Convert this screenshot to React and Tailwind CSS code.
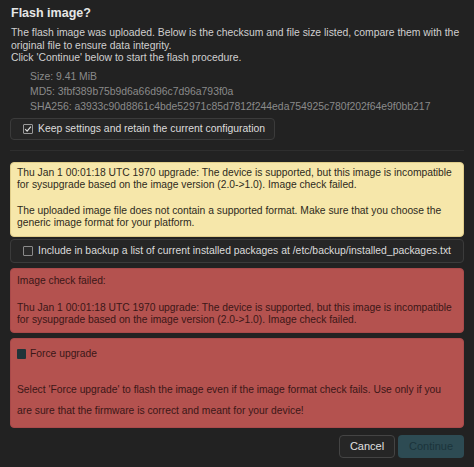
export default function App() {
  return (
    <div
      className="w-[474px] h-[467px] bg-[#222222] text-[#d4d4d4] overflow-hidden px-[10px]"
      style={{ fontFamily: '"Liberation Sans", Arial, sans-serif' }}
    >
      <h3 className="pt-[5px] pl-[1px] text-[12.5px] leading-[16px] font-bold text-[#e6e6e6]">Flash image?</h3>
      <div className="mt-[6px] pl-[1px] text-[10.4px] leading-[12.5px] text-[#d0d0d0]">
        <p>
          The flash image was uploaded. Below is the checksum and file size listed, compare them with the
          original file to ensure data integrity.
          <br />
          Click 'Continue' below to start the flash procedure.
        </p>
      </div>
      <ul className="mt-[4px] pl-[20px] text-[10.4px] leading-[15px] text-[#8a8a8a]">
        <li>Size: 9.41 MiB</li>
        <li>MD5: 3fbf389b75b9d6a66d96c7d96a793f0a</li>
        <li>SHA256: a3933c90d8861c4bde52971c85d7812f244eda754925c780f202f64e9f0bb217</li>
      </ul>
      <div className="mt-[4px] w-[265px] h-[22px] flex items-center gap-[5px] pl-[12px] rounded-[4px] border border-[#3b3b3b] bg-[#262626] text-[10.4px] text-[#dcdcdc]">
        <span className="w-[10px] h-[10px] border border-[#9a9a9a] rounded-[1px] flex items-center justify-center bg-[#2a2a2a]">
          <svg width="8" height="8" viewBox="0 0 8 8">
            <path d="M1.2 4.2 L3.1 6.1 L6.9 1.6" stroke="#e0e0e0" strokeWidth="1.2" fill="none" />
          </svg>
        </span>
        <span>Keep settings and retain the current configuration</span>
      </div>
      <div className="mt-[10px] border-t border-[#2e2e2e]" />
      <div className="mt-[11px] rounded-[4px] border border-[#e0cd8a] bg-[#f6e7aa] text-[#2e2a20] text-[10.3px] leading-[12.5px] pl-[6px] pr-[3px] pt-[4px] pb-[6px]">
        <p>
          Thu Jan 1 00:01:18 UTC 1970 upgrade: The device is supported, but this image is incompatible for
          sysupgrade based on the image version (2.0-&gt;1.0). Image check failed.
        </p>
        <p className="mt-[13px]">
          The uploaded image file does not contain a supported format. Make sure that you choose the generic
          image format for your platform.
        </p>
      </div>
      <div className="mt-[2px] h-[24px] flex items-center gap-[5px] pl-[12px] rounded-[4px] border border-[#3b3b3b] bg-[#262626] text-[10.4px] text-[#dcdcdc]">
        <span className="w-[10px] h-[10px] border border-[#8a8a8a] rounded-[1px] bg-[#2a2a2a]" />
        <span>Include in backup a list of current installed packages at /etc/backup/installed_packages.txt</span>
      </div>
      <div className="mt-[5px] rounded-[4px] border border-[#a9494a] bg-[#b4524f] text-[#3b1717] text-[10.3px] leading-[12px] pl-[6px] pr-[3px] pt-[6px] pb-[6px]">
        <p>Image check failed:</p>
        <p className="mt-[15px]">
          Thu Jan 1 00:01:18 UTC 1970 upgrade: The device is supported, but this image is incompatible for
          sysupgrade based on the image version (2.0-&gt;1.0). Image check failed.
        </p>
      </div>
      <div className="mt-[5px] h-[90px] rounded-[4px] border border-[#a9494a] bg-[#b4524f] text-[#3b1717] text-[10.3px] pl-[6px] pr-[12px] pt-[9px]">
        <div className="flex items-center gap-[4px] h-[12px]">
          <span className="w-[9px] h-[10px] bg-[#1f3439] rounded-[1px]" />
          <span>Force upgrade</span>
        </div>
        <p className="mt-[19px] leading-[21px]">
          Select 'Force upgrade' to flash the image even if the image format check fails. Use only if you are
          sure that the firmware is correct and meant for your device!
        </p>
      </div>
      <div className="mt-[7px] flex justify-end gap-[3px]">
        <button className="w-[56px] h-[23px] rounded-[4px] border border-[#444444] bg-[#262626] text-[#e0e0e0] text-[11px]">
          Cancel
        </button>
        <button className="w-[66px] h-[23px] rounded-[4px] bg-[#2d4b53] text-[#1b343b] text-[11px]">
          Continue
        </button>
      </div>
    </div>
  );
}
